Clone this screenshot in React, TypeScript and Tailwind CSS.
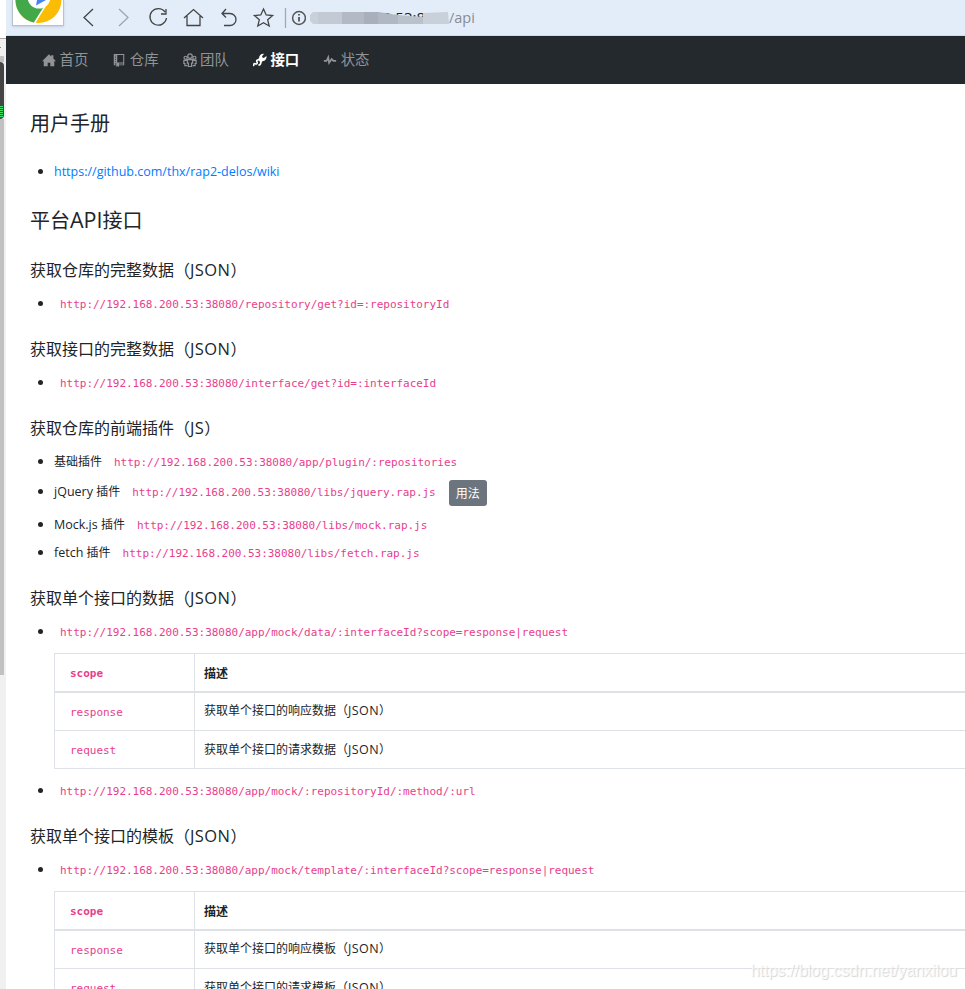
import type { ReactNode } from 'react';

const HOST = 'http://192.168.200.53:38080';

function Code({ children, bold }: { children: ReactNode; bold?: boolean }) {
  return (
    <code
      className={`mt-0.5 px-1.5 font-['DejaVu_Sans_Mono','Liberation_Mono',monospace] text-[11px] text-[#e83e8c] ${bold ? 'font-bold tracking-[-0.02px]' : 'tracking-[-0.025px]'}`}
    >
      {children}
    </code>
  );
}

function Item({ children, className = 'h-7' }: { children: ReactNode; className?: string }) {
  return (
    <li className={`flex items-center whitespace-nowrap ${className}`}>
      <span className="-mt-px mr-[11px] ml-2 size-[5px] shrink-0 rounded-full bg-[#212529]" />
      {children}
    </li>
  );
}

function Title({ children, format = 'JSON' }: { children: ReactNode; format?: string }) {
  return (
    <h2 className="mt-[19px] mb-2 h-6 text-[16px] leading-6 whitespace-nowrap">
      {children}（<span className="text-[16.5px] tracking-[0.4px]">{format}</span>）
    </h2>
  );
}

function ScopeTable({ kind }: { kind: string }) {
  const rows = [
    { name: 'response', text: `获取单个接口的响应${kind}` },
    { name: 'request', text: `获取单个接口的请求${kind}` },
  ];

  return (
    <table className="mt-[7px] mb-2 ml-6 w-[960px] table-fixed border-collapse border border-[#dee2e6] text-left text-[12px]">
      <thead>
        <tr className="h-[38px] border-b-2 border-[#dee2e6]">
          <th className="w-[140px] border-r border-[#dee2e6] pt-0.5 pl-[9px]"><Code bold>scope</Code></th>
          <th className="pt-[3px] pl-[9px] font-bold">描述</th>
        </tr>
      </thead>
      <tbody>
        {rows.map((row, index) => (
          <tr key={row.name} className={`border-b border-[#dee2e6] ${index === 0 ? 'h-[39px]' : 'h-[38px]'}`}>
            <td className="border-r border-[#dee2e6] pt-px pl-[9px]"><Code>{row.name}</Code></td>
            <td className="pt-px pl-[9px]">{row.text}（<span className="text-[12.5px] tracking-[0.4px]">JSON</span>）</td>
          </tr>
        ))}
      </tbody>
    </table>
  );
}

const navItems = [
  {
    label: '首页',
    icon: <path d="M8 1.500l2.500 2.400V2.500h2.500v3.800l3 3h-2V15H9.500v-4h-3v4H2V9.300H0z" />,
  },
  {
    label: '仓库',
    icon: (
      <>
        <path d="M2 1h12v13H8v2l-1.500-1.200L5 16v-2H2zm4 1.200v8.600h6.800V2.200zM3.200 12v1H5v-1zM8 12v1h4.800v-1z" fillRule="evenodd" />
        <path d="M3.500 3h1v1h-1zm0 2h1v1h-1zm0 2h1v1h-1zm0 2h1v1h-1z" fill="#24292e" />
      </>
    ),
  },
  {
    label: '团队',
    icon: (
      <g fill="none" stroke="currentColor" strokeWidth="1.400">
        <circle cx="8" cy="3.500" r="2.600" />
        <circle cx="3" cy="5.500" r="1.800" />
        <circle cx="13" cy="5.500" r="1.800" />
        <path d="M5 7.500h6v4H9.800v4H6.200v-4H5zM5 8.500H1v3.500h1.200v2.500H5M11 8.500h4v3.500h-1.200v2.500H11" />
      </g>
    ),
  },
  {
    label: '接口',
    active: true,
    icon: (
      <>
        <path d="M7 5.500C7 3 9.500.5 12.500 1L10.300 3.700l.5 1.500 1.600.5L15.300 3.500c.7 3-1.300 5.700-4.500 6l-1.300 1.300L5.700 7z" />
        <path d="M7.500 8.500c-1.500-1.500-4-.5-3 1.500s-.5 3-2 2.300S.5 13 .8 15M8 9c2 2 .5 4.500-1.800 5" fill="none" stroke="currentColor" strokeWidth="1.900" />
      </>
    ),
  },
  {
    label: '状态',
    icon: <path d="M11.500 8L8.800 5.400 6.600 8.500 5.500 1.600 2.380 8H0v2h3.600l.9-1.800.9 5.400L9 8.500l1.600 1.500H14V8z" transform="translate(1)" />,
  },
];

export default function App() {
  return (
    <div className="relative flex h-[989px] w-[965px] overflow-hidden bg-white font-['Open_Sans','Noto_Sans_CJK_SC',sans-serif] text-[12.5px] text-[#212529]">
      {/* Edge of the window behind */}
      <div className="flex w-1.5 shrink-0 flex-col bg-[#f0f0f0]">
        <div className="h-[39px] border-b border-[#aaa] bg-white" />
        <div className="h-[17px] pt-2"><div className="h-px w-px bg-[#888]" /></div>
        <div className="h-[6px] w-1 bg-[#c1c1c1]" />
        <div className="h-[57px] w-1 rounded-r bg-[#444] pt-[44px]">
          <div className="h-3 w-[3px] bg-[repeating-linear-gradient(#3fe06a_0_1px,#2a5a38_1px_2px)]" />
        </div>
        <div className="h-[556px] w-1 bg-[#c1c1c1]" />
      </div>

      <div className="min-w-0 grow">
        {/* Browser toolbar */}
        <header className="flex h-9 items-start border-b border-[#cfdaed] bg-[#e3edfa]">
          <div className="ml-1.5 h-[26px] w-[52px] shrink-0 border border-t-0 border-[#b8c2ce] bg-white shadow-sm">
            <svg width="50" height="25" viewBox="0 0 50 25">
              <circle cx="25.500" cy="0" r="23" fill="#fbbc05" />
              <path d="M2.500 0A23 23 0 0 0 21.500 22.700L33 5 25 0z" fill="#43a847" />
              <path d="M21.500 23L34 3" stroke="#fff" strokeWidth="1.500" />
              <circle cx="26" cy="-3" r="11.500" fill="#fff" />
              <path d="M20 0h4l-1 5.500L33 0z" fill="#4285f4" />
            </svg>
          </div>
          <svg className="ml-3 shrink-0" width="230" height="35" viewBox="0 0 230 35" fill="none" stroke="#444" strokeWidth="1.300">
            <path d="M17 9l-9 8.500L17 26" />
            <path d="M43 9l9 8.500L43 26" stroke="#a0a5ac" />
            <path d="M89 12a8.300 8.300 0 1 0 1.500 6M90 9v5h-5" />
            <path d="M108 18l9.500-8.500L127 18M111 16v9.500h13V16" />
            <path d="M150 9l-4 4.500 4 4M146 13.500h8a6 6 0 0 1 0 12h-6" />
            <path d="M187.500 9l2.700 6 6.400.6-4.900 4.200 1.500 6.200-5.700-3.300-5.700 3.300 1.500-6.200-4.900-4.200 6.400-.6z" />
            <path d="M209.500 8v20" stroke="#a0a8b2" />
            <circle cx="223" cy="18" r="6.400" stroke="#555" strokeWidth="1.500" />
            <path d="M223 17v4.500M223 14v1.500" stroke="#555" strokeWidth="1.800" />
          </svg>
          <div className="relative flex h-[35px] w-[143px] items-center justify-end font-['Open_Sans',sans-serif] text-[15px] text-[#222]">
            <span className="mr-[24px]">00.53:8</span>
            {/* Mosaic over the host name */}
            <svg className="absolute top-3 left-[4px]" width="139" height="14" viewBox="0 0 139 14">
              <path d="M3 0h25v12H3L0 9V3z" fill="#c8d0da" />
              <path d="M8 0h24v12H8z" fill="#c3cad4" />
              <path d="M32 0h22v12H32z" fill="#b3bac5" />
              <path d="M54 0h14l14 2v10H54z" fill="#a9b0bc" />
              <path d="M68 1l22 2v9H68z" fill="#b0b8c3" />
              <path d="M88 3l26 2v7H88z" fill="#b9c1cb" />
              <path d="M113 1l25-1 1 12h-26z" fill="#c8d0da" />
              <path d="M60 12h79v2H60z" fill="#e3edfa" />
            </svg>
          </div>
          <span className="pt-[6px] font-['Open_Sans',sans-serif] text-[14.5px] leading-6 text-[#888c92]">/api</span>
        </header>

        <nav className="flex h-12 items-center gap-6 bg-[#24292e] pl-9 text-[14.4px] text-[#919496]">
          {navItems.map((item) => (
            <a key={item.label} className={`flex items-center gap-[3.5px] ${item.active ? 'font-bold text-white' : ''}`}>
              <svg className="mt-px" width="14" height="14" viewBox="0 0 16 16" fill="currentColor">{item.icon}</svg>
              <span>{item.label}</span>
            </a>
          ))}
        </nav>

        <main className="pt-[26px] pl-6">
          <h1 className="h-7 text-[20px] leading-7">用户手册</h1>
          <ul className="mt-5">
            <Item><a className="text-[#007bff]">https://github.com/thx/rap2-delos/wiki</a></Item>
          </ul>
          <h1 className="mt-5 mb-6 h-7 text-[20px] leading-7">
            平台<span className="text-[21.5px]">API</span>接口
          </h1>

          <Title>获取仓库的完整数据</Title>
          <ul>
            <Item><Code>{HOST}/repository/get?id=:repositoryId</Code></Item>
          </ul>

          <Title>获取接口的完整数据</Title>
          <ul>
            <Item><Code>{HOST}/interface/get?id=:interfaceId</Code></Item>
          </ul>

          <Title format="JS">获取仓库的前端插件</Title>
          <ul>
            <Item>
              <span className="mr-1.5 text-[12px]">基础插件</span>
              <Code>{HOST}/app/plugin/:repositories</Code>
            </Item>
            <Item className="h-[35px] pb-[3px]">
              <span className="mr-1.5">jQuery <span className="text-[12px]">插件</span></span>
              <Code>{HOST}/libs/jquery.rap.js</Code>
              <button className="mt-px ml-[7px] h-[26px] w-[38px] rounded-[3px] bg-[#6c757d] pt-0.5 text-[12px] text-white">用法</button>
            </Item>
            <Item>
              <span className="mr-1.5">Mock.js <span className="text-[12px]">插件</span></span>
              <Code>{HOST}/libs/mock.rap.js</Code>
            </Item>
            <Item>
              <span className="mr-1.5">fetch <span className="text-[12px]">插件</span></span>
              <Code>{HOST}/libs/fetch.rap.js</Code>
            </Item>
          </ul>

          <Title>获取单个接口的数据</Title>
          <ul>
            <Item><Code>{HOST}/app/mock/data/:interfaceId?scope=response|request</Code></Item>
          </ul>
          <ScopeTable kind="数据" />
          <ul>
            <Item><Code>{HOST}/app/mock/:repositoryId/:method/:url</Code></Item>
          </ul>

          <Title>获取单个接口的模板</Title>
          <ul>
            <Item><Code>{HOST}/app/mock/template/:interfaceId?scope=response|request</Code></Item>
          </ul>
          <ScopeTable kind="模板" />
        </main>
      </div>

      <div className="absolute right-[8px] bottom-2 font-['Liberation_Sans',sans-serif] text-[16px] leading-5 text-white/70 [text-shadow:1px_1px_1px_#d4d4d4]">
        https://blog.csdn.net/yanxilou
      </div>
    </div>
  );
}
